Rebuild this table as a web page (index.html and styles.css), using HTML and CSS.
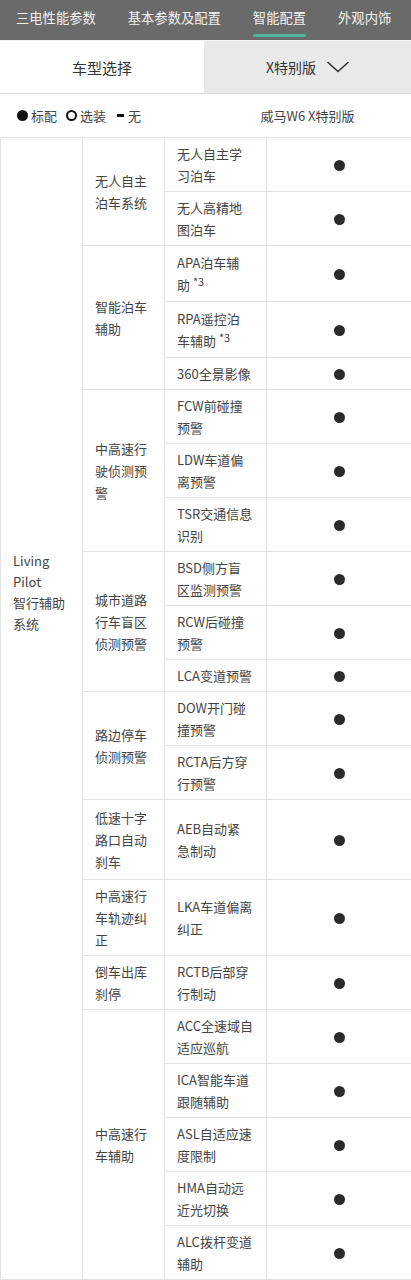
FILE: index.html
```html
<!DOCTYPE html>
<html lang="zh-CN">
<head>
<meta charset="utf-8">
<title>智能配置</title>
<link rel="stylesheet" href="styles.css">
</head>
<body>
<nav class="tabs">
  <div class="tab">三电性能参数</div>
  <div class="tab">基本参数及配置</div>
  <div class="tab active">智能配置</div>
  <div class="tab">外观内饰</div>
</nav>
<div class="model">
  <div class="model-label">车型选择</div>
  <div class="model-select">
    <span>X特别版</span>
    <svg class="chevron" width="22" height="12" viewBox="0 0 22 12"><polyline points="1,1.5 11,10.5 21,1.5" fill="none" stroke="#333" stroke-width="1.6" stroke-linecap="round" stroke-linejoin="round"/></svg>
  </div>
</div>
<div class="legend">
  <div class="legend-keys">
    <span class="key"><i class="k-dot"></i>标配</span>
    <span class="key"><i class="k-ring"></i>选装</span>
    <span class="key"><i class="k-dash"></i>无</span>
  </div>
  <div class="legend-model">威马W6 X特别版</div>
</div>
<table class="spec">
  <colgroup><col class="w1"><col class="w2"><col class="w3"><col class="w4"></colgroup>
  <tbody>
    <tr><td class="c1" rowspan="21">Living<br>Pilot<br>智行辅助<br>系统</td><td rowspan="2">无人自主<br>泊车系统</td><td>无人自主学<br>习泊车</td><td class="val"><span class="dot"></span></td></tr>
    <tr><td>无人高精地<br>图泊车</td><td class="val"><span class="dot"></span></td></tr>
    <tr class="sup-row"><td rowspan="3">智能泊车<br>辅助</td><td>APA泊车辅<br>助 <sup>*3</sup></td><td class="val"><span class="dot"></span></td></tr>
    <tr class="sup-row"><td>RPA遥控泊<br>车辅助 <sup>*3</sup></td><td class="val"><span class="dot"></span></td></tr>
    <tr><td>360全景影像</td><td class="val"><span class="dot"></span></td></tr>
    <tr><td rowspan="3">中高速行<br>驶侦测预<br>警</td><td>FCW前碰撞<br>预警</td><td class="val"><span class="dot"></span></td></tr>
    <tr><td>LDW车道偏<br>离预警</td><td class="val"><span class="dot"></span></td></tr>
    <tr><td>TSR交通信息<br>识别</td><td class="val"><span class="dot"></span></td></tr>
    <tr><td rowspan="3">城市道路<br>行车盲区<br>侦测预警</td><td>BSD侧方盲<br>区监测预警</td><td class="val"><span class="dot"></span></td></tr>
    <tr><td>RCW后碰撞<br>预警</td><td class="val"><span class="dot"></span></td></tr>
    <tr><td>LCA变道预警</td><td class="val"><span class="dot"></span></td></tr>
    <tr><td rowspan="2">路边停车<br>侦测预警</td><td>DOW开门碰<br>撞预警</td><td class="val"><span class="dot"></span></td></tr>
    <tr><td>RCTA后方穿<br>行预警</td><td class="val"><span class="dot"></span></td></tr>
    <tr class="tall"><td>低速十字<br>路口自动<br>刹车</td><td>AEB自动紧<br>急制动</td><td class="val"><span class="dot"></span></td></tr>
    <tr><td>中高速行<br>车轨迹纠<br>正</td><td>LKA车道偏离<br>纠正</td><td class="val"><span class="dot"></span></td></tr>
    <tr><td>倒车出库<br>刹停</td><td>RCTB后部穿<br>行制动</td><td class="val"><span class="dot"></span></td></tr>
    <tr><td rowspan="5">中高速行<br>车辅助</td><td>ACC全速域自<br>适应巡航</td><td class="val"><span class="dot"></span></td></tr>
    <tr><td>ICA智能车道<br>跟随辅助</td><td class="val"><span class="dot"></span></td></tr>
    <tr><td>ASL自适应速<br>度限制</td><td class="val"><span class="dot"></span></td></tr>
    <tr><td>HMA自动远<br>近光切换</td><td class="val"><span class="dot"></span></td></tr>
    <tr><td>ALC拨杆变道<br>辅助</td><td class="val"><span class="dot"></span></td></tr>
  </tbody>
</table>
<div class="bottom"></div>
</body>
</html>
```
FILE: styles.css
```css
html { background: #fff; }
body {
  margin: 0;
  width: 411px;
  font-family: "Noto Sans CJK SC", "Noto Sans", sans-serif;
  color: #444;
}

.tabs {
  display: flex;
  gap: 32px;
  padding-left: 16px;
  height: 40px;
  background: #6a6a6a;
}
.tab {
  display: flex;
  flex-direction: column;
  padding-top: 7px;
  font-size: 13.3px;
  line-height: 22px;
  color: #f2f2f2;
  white-space: nowrap;
}
.tab.active::after {
  content: "";
  height: 3px;
  margin-top: 5px;
  border-radius: 2px;
  background: #4fb89b;
}

.model {
  display: flex;
  height: 52px;
  border-top: 1px solid #f4f4f4;
  border-bottom: 1px solid #dcdcdc;
}
.model-label {
  flex: 0 0 204px;
  display: flex;
  align-items: center;
  justify-content: center;
  font-size: 15px;
  color: #333;
}
.model-select {
  flex: 1;
  display: flex;
  align-items: center;
  justify-content: center;
  gap: 11px;
  background: #e9e9e9;
  font-size: 14px;
  color: #333;
}

.legend {
  display: flex;
  align-items: center;
  height: 43px;
  font-size: 13px;
  color: #444;
}
.legend-keys {
  flex: 0 0 204px;
  display: flex;
  align-items: center;
  gap: 9px;
  padding-left: 17px;
  box-sizing: border-box;
}
.key {
  display: flex;
  align-items: center;
  gap: 3px;
}
.k-dot {
  width: 11px;
  height: 11px;
  border-radius: 50%;
  background: #111;
}
.k-ring {
  width: 11px;
  height: 11px;
  box-sizing: border-box;
  border-radius: 50%;
  border: 2.5px solid #111;
}
.k-dash {
  width: 7px;
  height: 3px;
  margin: 0 1px 0 2px;
  background: #111;
}
.legend-model {
  flex: 1;
  text-align: center;
}

.spec {
  width: 411px;
  table-layout: fixed;
  border-collapse: collapse;
  font-size: 13px;
  line-height: 22px;
}
.w1 { width: 82px; }
.w2 { width: 82px; }
.w3 { width: 102px; }
.w4 { width: 145px; }
.spec td {
  border: 1px solid #e3e3e3;
  padding: 5px 12px 4px;
  vertical-align: middle;
  white-space: nowrap;
  color: #444;
}
.spec td.c1 {
  vertical-align: top;
  padding-top: 412px;
  line-height: 21px;
}
.spec tr.tall td {
  padding-top: 7px;
  padding-bottom: 6px;
}
.spec tr.sup-row td {
  padding-top: 6px;
  padding-bottom: 5px;
}
.spec td.val {
  text-align: center;
  padding-left: 0;
  padding-right: 0;
}
.dot {
  display: block;
  width: 11px;
  height: 11px;
  margin: 0 auto;
  border-radius: 50%;
  background: #2b2b2b;
}
.spec sup {
  font-size: 11px;
  line-height: 0;
  vertical-align: 4px;
}
.bottom {
  height: 20px;
  background: #e6e6e6;
}
```
